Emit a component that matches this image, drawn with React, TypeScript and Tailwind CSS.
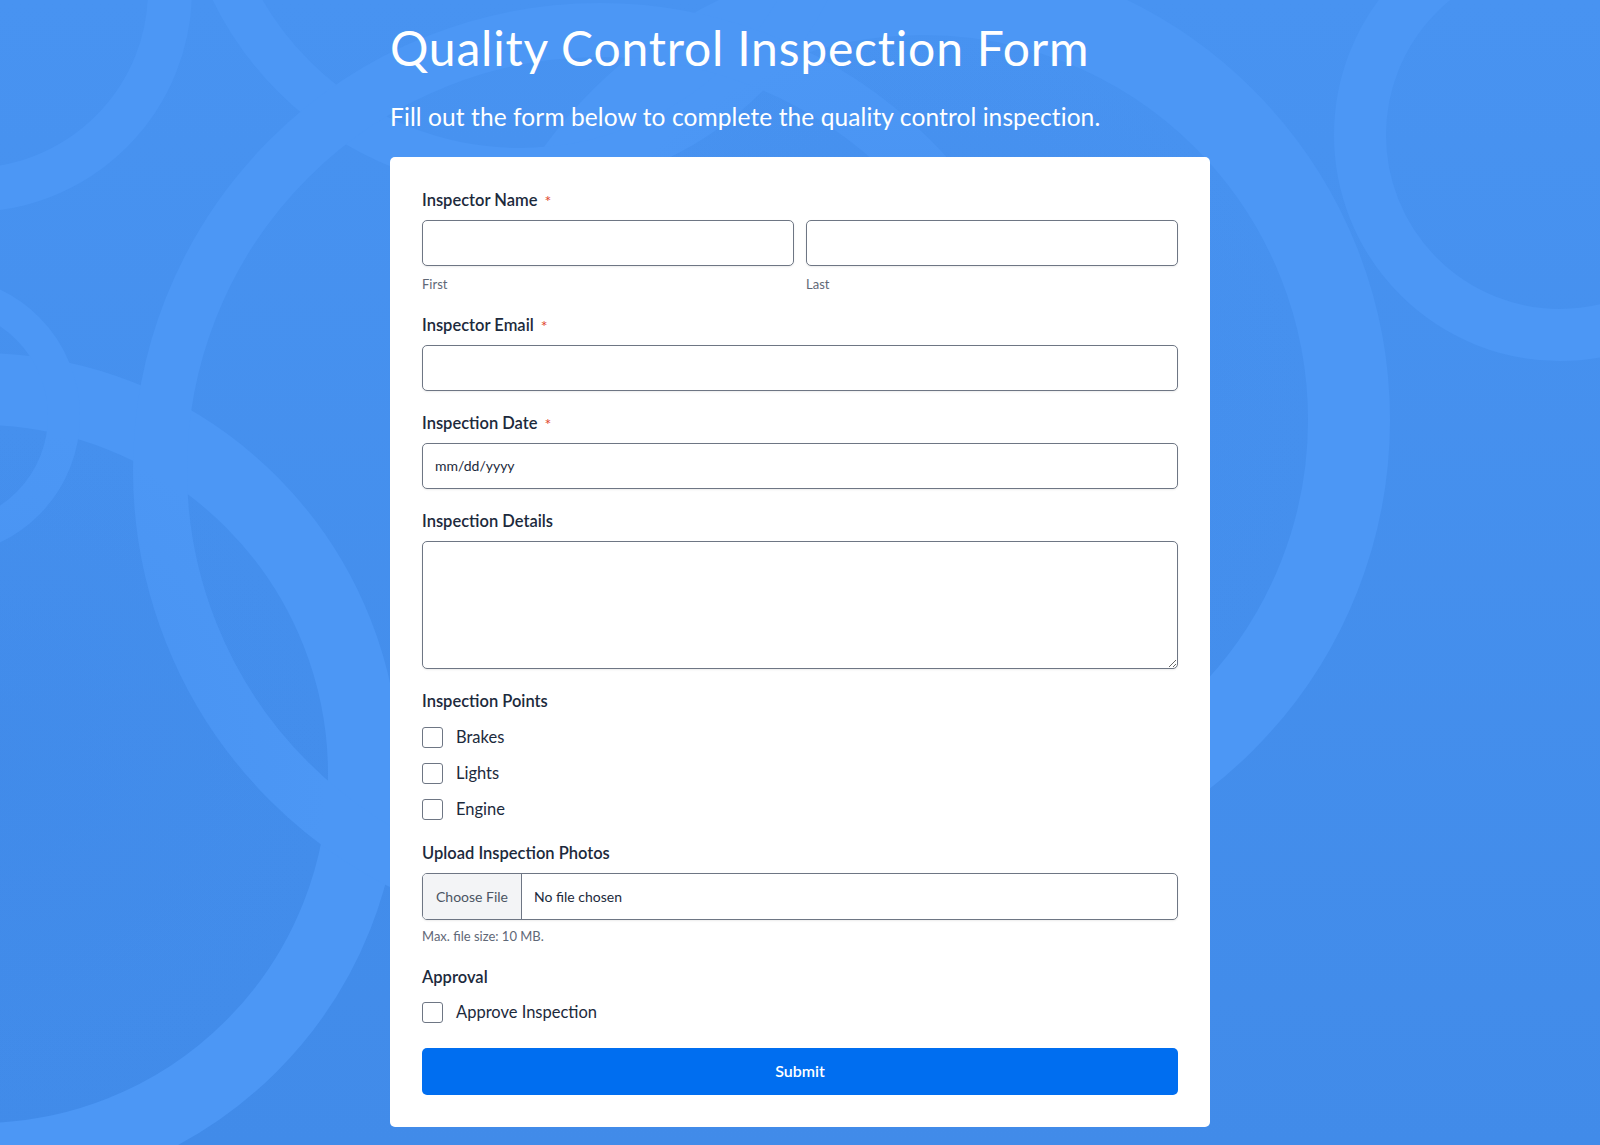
import { useState } from 'react';

// Decorative rings behind the form
function Backdrop() {
  return (
    <svg
      className="absolute inset-0 h-full w-full"
      viewBox="0 0 1600 1145"
      preserveAspectRatio="none"
      aria-hidden="true"
    >
      <defs>
        <linearGradient id="bg" x1="0" y1="0" x2="0" y2="1">
          <stop offset="0" stopColor="#4893f1" />
          <stop offset="1" stopColor="#418be9" />
        </linearGradient>
        <radialGradient id="shade">
          <stop offset="0" stopColor="#3d86e6" stopOpacity="0.35" />
          <stop offset="1" stopColor="#3d86e6" stopOpacity="0" />
        </radialGradient>
      </defs>
      <rect width="1600" height="1145" fill="url(#bg)" />
      <g fill="none" stroke="#4c97f5">
        <circle cx="923" cy="420" r="426" strokeWidth="82" />
        <circle cx="-21" cy="774" r="385" strokeWidth="72" />
        <circle cx="-60" cy="416" r="124" strokeWidth="32" />
        <circle cx="520" cy="-150" r="320" strokeWidth="44" />
        <circle cx="600" cy="470" r="440" strokeWidth="54" />
        <circle cx="1560" cy="135" r="200" strokeWidth="52" />
        <circle cx="-30" cy="-10" r="200" strokeWidth="44" />
      </g>
      <circle cx="923" cy="420" r="385" fill="url(#shade)" />
      <circle cx="-21" cy="774" r="350" fill="url(#shade)" />
    </svg>
  );
}

function Label({ text, required }: { text: string; required?: boolean }) {
  return (
    <div className="mb-2 flex items-center text-[16.5px] font-semibold leading-6 text-[#1c2a3c]">
      {text}
      {required && <span className="ml-[7px] mt-[3px] text-[16px] font-normal leading-none text-[#e0452e]">*</span>}
    </div>
  );
}

const inputCls =
  'block h-[46px] w-full rounded-[5px] border border-[#6e7684] bg-white px-3 text-[14px] text-[#1c2a3c] shadow-[0_1px_2px_rgba(0,0,0,0.08)] outline-none';

function CheckRow({ label }: { label: string }) {
  const [on, setOn] = useState(false);
  return (
    <label className="flex h-[22px] cursor-pointer items-center">
      <input
        type="checkbox"
        checked={on}
        onChange={() => setOn(!on)}
        className="h-[21px] w-[21px] appearance-none rounded-[3px] border border-[#6e7684] bg-white checked:bg-[#006ef0]"
      />
      <span className="ml-[13px] text-[16.5px] text-[#1c2a3c]">{label}</span>
    </label>
  );
}

export default function App() {
  return (
    <div className="relative min-h-screen overflow-hidden font-['Lato','Liberation_Sans',sans-serif]">
      <Backdrop />
      <div className="relative mx-auto w-[820px] pb-[18px] pt-[19px]">
        <h1 className="text-[48px] font-normal leading-[1.2] tracking-[0.8px] text-white">
          Quality Control Inspection Form
        </h1>
        <p className="mt-[24px] text-[24.5px] leading-8 tracking-[0.1px] text-white">
          Fill out the form below to complete the quality control inspection.
        </p>

        <form className="mt-[24px] rounded-[5px] bg-white px-8 pb-8 pt-[31px]" onSubmit={(e) => e.preventDefault()}>
          <div className="flex flex-col gap-5">
            <div>
              <Label text="Inspector Name" required />
              <div className="grid grid-cols-2 gap-3">
                <div>
                  <input className={inputCls} />
                  <div className="mt-[9px] text-[13px] leading-[18px] text-[#5f6877]">First</div>
                </div>
                <div>
                  <input className={inputCls} />
                  <div className="mt-[9px] text-[13px] leading-[18px] text-[#5f6877]">Last</div>
                </div>
              </div>
            </div>

            <div>
              <Label text="Inspector Email" required />
              <input type="email" className={inputCls} />
            </div>

            <div>
              <Label text="Inspection Date" required />
              <input className={`${inputCls} placeholder:text-[#1c2a3c]`} placeholder="mm/dd/yyyy" />
            </div>

            <div>
              <Label text="Inspection Details" />
              <textarea className="block h-[128px] w-full rounded-[5px] border border-[#6e7684] bg-white px-3 py-2 text-[14px] shadow-[0_1px_2px_rgba(0,0,0,0.08)] outline-none" />
            </div>

            <div>
              <Label text="Inspection Points" />
              <div className="mt-[14px] flex flex-col gap-[14px]">
                <CheckRow label="Brakes" />
                <CheckRow label="Lights" />
                <CheckRow label="Engine" />
              </div>
            </div>

            <div>
              <Label text="Upload Inspection Photos" />
              <div className="flex h-[47px] w-full overflow-hidden rounded-[5px] border border-[#6e7684] shadow-[0_1px_2px_rgba(0,0,0,0.08)]">
                <button
                  type="button"
                  className="w-[99px] shrink-0 border-r border-[#6e7684] bg-[#f3f4f6] text-[14px] text-[#4b5563]"
                >
                  Choose File
                </button>
                <div className="flex items-center pl-3 text-[14px] text-[#1c2a3c]">No file chosen</div>
              </div>
              <div className="mt-[7px] text-[13px] leading-[18px] text-[#5f6877]">Max. file size: 10 MB.</div>
            </div>

            <div>
              <Label text="Approval" />
              <div className="mt-[13px]">
                <CheckRow label="Approve Inspection" />
              </div>
            </div>
          </div>

          <button
            type="submit"
            className="mt-[24px] h-[47px] w-full rounded-[5px] bg-[#006ef0] text-[16px] font-semibold text-white"
          >
            Submit
          </button>
        </form>
      </div>
    </div>
  );
}
